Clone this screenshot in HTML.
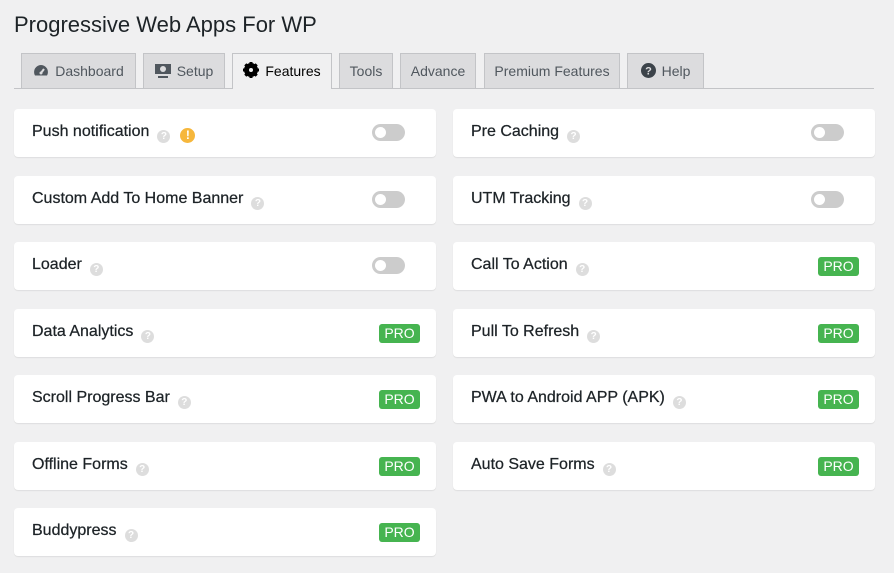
<!DOCTYPE html><html><head><style>
body{margin:0;background:#f0f0f1;font-family:"Liberation Sans",sans-serif;width:894px;height:573px;overflow:hidden;position:relative}
h1{position:absolute;left:14px;top:12px;margin:0;font-size:22px;font-weight:400;color:#1d2327}
.line{position:absolute;left:14px;width:860px;top:88px;border-top:1px solid #c3c4c7}
.tab{position:absolute;top:53px;height:35px;border:1px solid #c3c4c7;border-bottom:none;background:#dcdcde;color:#50575e;font-size:14px;line-height:35px;text-align:center;box-sizing:border-box;white-space:nowrap}
.tab.on{background:#f0f0f1;color:#000;height:36px;z-index:2}
.tab svg{vertical-align:-2px;margin-right:6px}
.card{position:absolute;width:422px;height:48px;background:#fff;border-radius:4px;box-shadow:0 1px 1px rgba(0,0,0,.08)}
.t{position:absolute;left:18px;top:14px;font-size:16px;color:#1d2327;-webkit-text-stroke:.25px #1d2327}
.q{display:inline-block;width:13px;height:13px;border-radius:50%;background:#ddd;color:#fff;font-size:10px;line-height:13px;text-align:center;margin-left:8px;vertical-align:-3px;font-weight:700;-webkit-text-stroke:0}
.w{display:inline-block;width:15px;height:15px;border-radius:50%;background:#f6b73c;color:#fff;font-size:12px;line-height:15px;text-align:center;margin-left:10px;vertical-align:-3px;font-weight:700;-webkit-text-stroke:0}
.tg{position:absolute;right:31px;top:15px;width:33px;height:17px;border-radius:9px;background:#ccc}
.tg:after{content:"";position:absolute;left:3px;top:3px;width:11px;height:11px;border-radius:50%;background:#fff}
.pro{position:absolute;right:16px;top:15px;width:41px;height:19px;border-radius:3px;background:#46b450;color:#fff;font-size:14px;line-height:19px;text-align:center}
</style></head><body>
<h1>Progressive Web Apps For WP</h1>
<div class="line"></div>
<div class="tab" style="left:21px;width:115px"><svg width="16" height="14" viewBox="0 0 16 14"><path d="M8 1a7 7 0 0 0-6 10.5h12A7 7 0 0 0 8 1z" fill="#50575e"/><path d="M8 9l3-4" stroke="#dcdcde" stroke-width="2"/><circle cx="8" cy="9" r="1.5" fill="#dcdcde"/></svg>Dashboard</div>
<div class="tab" style="left:143px;width:82px"><svg width="16" height="14" viewBox="0 0 16 14"><rect x="0" y="0" width="16" height="10" fill="#50575e"/><circle cx="8" cy="5" r="3" fill="#dcdcde"/><rect x="3" y="12" width="10" height="2" fill="#50575e"/></svg>Setup</div>
<div class="tab on" style="left:232px;width:100px"><svg width="16" height="16" viewBox="0 0 16 16"><circle cx="8" cy="8" r="5.5" fill="none" stroke="#000" stroke-width="3"/><g stroke="#000" stroke-width="3"><path d="M8 0v16M0 8h16M2.3 2.3l11.4 11.4M13.7 2.3L2.3 13.7"/></g><circle cx="8" cy="8" r="4" fill="#000"/><circle cx="8" cy="8" r="2" fill="#f0f0f1"/></svg>Features</div>
<div class="tab" style="left:339px;width:54px">Tools</div>
<div class="tab" style="left:400px;width:76px">Advance</div>
<div class="tab" style="left:484px;width:136px">Premium Features</div>
<div class="tab" style="left:627px;width:77px"><svg width="15" height="15" viewBox="0 0 15 15"><circle cx="7.5" cy="7.5" r="7.5" fill="#3c434a"/><text x="7.5" y="11.5" font-size="11" font-weight="bold" fill="#dcdcde" text-anchor="middle" font-family="Liberation Sans">?</text></svg>Help</div>

<div class="card" style="left:14px;top:109px"><div class="t">Push notification<span class="q">?</span><span class="w">!</span></div><div class="tg"></div></div>
<div class="card" style="left:453px;top:109px"><div class="t">Pre Caching<span class="q">?</span></div><div class="tg"></div></div>
<div class="card" style="left:14px;top:176px"><div class="t">Custom Add To Home Banner<span class="q">?</span></div><div class="tg"></div></div>
<div class="card" style="left:453px;top:176px"><div class="t">UTM Tracking<span class="q">?</span></div><div class="tg"></div></div>
<div class="card" style="left:14px;top:242px"><div class="t">Loader<span class="q">?</span></div><div class="tg"></div></div>
<div class="card" style="left:453px;top:242px"><div class="t">Call To Action<span class="q">?</span></div><div class="pro">PRO</div></div>
<div class="card" style="left:14px;top:309px"><div class="t">Data Analytics<span class="q">?</span></div><div class="pro">PRO</div></div>
<div class="card" style="left:453px;top:309px"><div class="t">Pull To Refresh<span class="q">?</span></div><div class="pro">PRO</div></div>
<div class="card" style="left:14px;top:375px"><div class="t">Scroll Progress Bar<span class="q">?</span></div><div class="pro">PRO</div></div>
<div class="card" style="left:453px;top:375px"><div class="t">PWA to Android APP (APK)<span class="q">?</span></div><div class="pro">PRO</div></div>
<div class="card" style="left:14px;top:442px"><div class="t">Offline Forms<span class="q">?</span></div><div class="pro">PRO</div></div>
<div class="card" style="left:453px;top:442px"><div class="t">Auto Save Forms<span class="q">?</span></div><div class="pro">PRO</div></div>
<div class="card" style="left:14px;top:508px"><div class="t">Buddypress<span class="q">?</span></div><div class="pro">PRO</div></div>
</body></html>
